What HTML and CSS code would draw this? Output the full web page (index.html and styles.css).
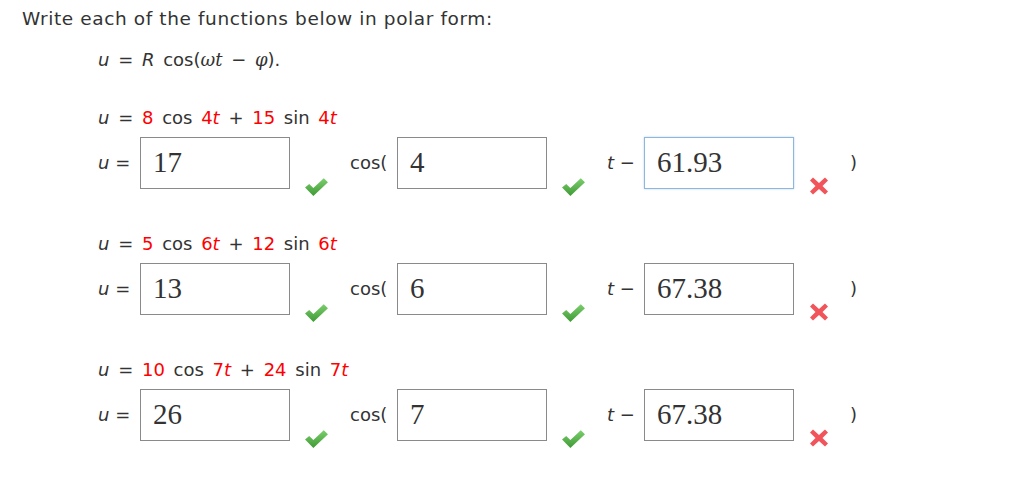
FILE: index.html
```html
<!DOCTYPE html>
<html>
<head>
<meta charset="utf-8">
<link rel="stylesheet" href="styles.css">
</head>
<body>
<div class="page">
  <div class="title">Write each of the functions below in polar form:</div>
  <div class="formula general"><i>u</i> = <i>R</i> cos(<span class="mi">ωt</span> − <span class="mi">φ</span>).</div>

  <div class="problem">
    <div class="formula"><i>u</i> = <span class="red">8</span> cos <span class="red">4<i>t</i></span> + <span class="red">15</span> sin <span class="red">4<i>t</i></span></div>
    <div class="row">
      <span class="lbl lbl-u"><i>u</i> =</span>
      <div class="box">17</div>
      <span class="mark"><svg class="check" viewBox="0 0 24 20"><defs><linearGradient id="g1" x1="0" y1="0" x2="0" y2="1"><stop offset="0" stop-color="#7ccf6e"/><stop offset="1" stop-color="#3f9a35"/></linearGradient></defs><path d="M1 11 L5 7.5 L9 11.5 L19 2 L23 6 L9 19 Z" fill="url(#g1)"/></svg></span>
      <span class="lbl lbl-cos">cos(</span>
      <div class="box">4</div>
      <span class="mark"><svg class="check" viewBox="0 0 24 20"><path d="M1 11 L5 7.5 L9 11.5 L19 2 L23 6 L9 19 Z" fill="url(#g1)"/></svg></span>
      <span class="lbl lbl-t"><i>t</i> −</span>
      <div class="box focus">61.93</div>
      <span class="mark last"><svg class="cross" viewBox="0 0 22 20"><path d="M2 4.5 L5 1.5 L11 7 L17 1.5 L20 4.5 L14.5 10 L20 15.5 L17 18.5 L11 13 L5 18.5 L2 15.5 L7.5 10 Z" fill="#f2545b"/></svg></span>
      <span class="lbl lbl-close">)</span>
    </div>
  </div>

  <div class="problem">
    <div class="formula"><i>u</i> = <span class="red">5</span> cos <span class="red">6<i>t</i></span> + <span class="red">12</span> sin <span class="red">6<i>t</i></span></div>
    <div class="row">
      <span class="lbl lbl-u"><i>u</i> =</span>
      <div class="box">13</div>
      <span class="mark"><svg class="check" viewBox="0 0 24 20"><path d="M1 11 L5 7.5 L9 11.5 L19 2 L23 6 L9 19 Z" fill="url(#g1)"/></svg></span>
      <span class="lbl lbl-cos">cos(</span>
      <div class="box">6</div>
      <span class="mark"><svg class="check" viewBox="0 0 24 20"><path d="M1 11 L5 7.5 L9 11.5 L19 2 L23 6 L9 19 Z" fill="url(#g1)"/></svg></span>
      <span class="lbl lbl-t"><i>t</i> −</span>
      <div class="box">67.38</div>
      <span class="mark last"><svg class="cross" viewBox="0 0 22 20"><path d="M2 4.5 L5 1.5 L11 7 L17 1.5 L20 4.5 L14.5 10 L20 15.5 L17 18.5 L11 13 L5 18.5 L2 15.5 L7.5 10 Z" fill="#f2545b"/></svg></span>
      <span class="lbl lbl-close">)</span>
    </div>
  </div>

  <div class="problem">
    <div class="formula"><i>u</i> = <span class="red">10</span> cos <span class="red">7<i>t</i></span> + <span class="red">24</span> sin <span class="red">7<i>t</i></span></div>
    <div class="row">
      <span class="lbl lbl-u"><i>u</i> =</span>
      <div class="box">26</div>
      <span class="mark"><svg class="check" viewBox="0 0 24 20"><path d="M1 11 L5 7.5 L9 11.5 L19 2 L23 6 L9 19 Z" fill="url(#g1)"/></svg></span>
      <span class="lbl lbl-cos">cos(</span>
      <div class="box">7</div>
      <span class="mark"><svg class="check" viewBox="0 0 24 20"><path d="M1 11 L5 7.5 L9 11.5 L19 2 L23 6 L9 19 Z" fill="url(#g1)"/></svg></span>
      <span class="lbl lbl-t"><i>t</i> −</span>
      <div class="box">67.38</div>
      <span class="mark last"><svg class="cross" viewBox="0 0 22 20"><path d="M2 4.5 L5 1.5 L11 7 L17 1.5 L20 4.5 L14.5 10 L20 15.5 L17 18.5 L11 13 L5 18.5 L2 15.5 L7.5 10 Z" fill="#f2545b"/></svg></span>
      <span class="lbl lbl-close">)</span>
    </div>
  </div>
</div>
</body>
</html>
```

FILE: styles.css
```css
html, body {
  margin: 0;
  padding: 0;
  background: #fff;
}
body {
  font-family: "DejaVu Sans", Verdana, sans-serif;
  color: #333;
  font-size: 18px;
}
.page {
  padding: 7px 0 0 22px;
}
.title {
  font-size: 18.5px;
  letter-spacing: 0.6px;
  line-height: 24px;
}
.formula {
  margin-left: 76px;
  font-size: 18px;
  line-height: 24px;
  word-spacing: 3px;
}
.general {
  margin-top: 17px;
}
.mi {
  font-family: "DejaVu Serif", "Liberation Serif", serif;
  font-style: italic;
}
i {
  font-style: oblique;
}
.red {
  color: #ff0000;
}
.problem {
  margin-top: 34px;
}
.problem + .problem {
  margin-top: 31px;
}
.row {
  display: flex;
  align-items: flex-start;
  margin-left: 76px;
  margin-top: 7px;
  height: 64px;
}
.lbl {
  line-height: 51px;
  font-size: 18px;
}
.lbl-u {
  width: 42px;
}
.lbl-cos {
  width: 47px;
}
.lbl-t {
  width: 37px;
}
.box {
  box-sizing: border-box;
  width: 150px;
  height: 52px;
  border: 1px solid #8a8a8a;
  font-family: "Liberation Serif", "DejaVu Serif", serif;
  font-size: 29px;
  line-height: 48px;
  padding-left: 12px;
  color: #333;
}
.box.focus {
  border-color: #8fb6dc;
  box-shadow: 0 0 2px #b7d3ee;
}
.mark {
  display: flex;
  justify-content: flex-start;
  box-sizing: border-box;
  width: 60px;
  padding-left: 14px;
  padding-top: 39px;
}
.mark.last {
  width: 56px;
}
.check {
  width: 25px;
  height: 21px;
}
.cross {
  width: 22px;
  height: 20px;
}
```
